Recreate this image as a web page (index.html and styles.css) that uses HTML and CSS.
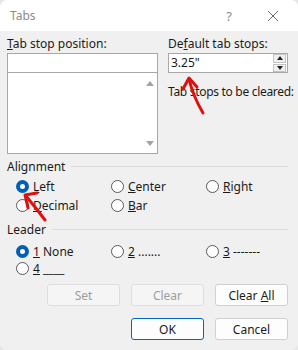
FILE: index.html
```html
<!DOCTYPE html>
<html lang="en">
  <head>
    <title>Tabs</title>
    <meta charset="utf-8" />
    <link rel="stylesheet" href="styles.css">
  </head>
  <body>
    <div class="window">
      <div class="titlebar">
        <span class="title">Tabs</span>
        <span class="help">?</span>
        <svg class="close" width="12" height="12" viewBox="0 0 12 12">
          <path d="M1 1 L11 11 M11 1 L1 11" stroke="#6e6e6e" stroke-width="1" fill="none"/>
        </svg>
      </div>

      <div class="content">
        <div class="top">
          <div class="col">
            <div class="label"><u>T</u>ab stop position:</div>
            <div class="textbox"></div>
            <div class="listbox">
              <div class="scroll">
                <span class="arrow up"></span>
                <span class="arrow down"></span>
              </div>
            </div>
          </div>
          <div class="col">
            <div class="label">De<u>f</u>ault tab stops:</div>
            <div class="textbox spin">
              <span class="value">3.25"</span>
              <div class="spinner">
                <span class="sbtn"><span class="tri up"></span></span>
                <span class="sbtn"><span class="tri down"></span></span>
              </div>
            </div>
            <div class="label cleared">Tab stops to be cleared:</div>
          </div>
        </div>

        <div class="group">
          <div class="heading"><span>Alignment</span><i></i></div>
          <div class="radios">
            <label class="radio on"><b></b><u>L</u>eft</label>
            <label class="radio"><b></b><u>C</u>enter</label>
            <label class="radio"><b></b><u>R</u>ight</label>
            <label class="radio"><b></b><u>D</u>ecimal</label>
            <label class="radio"><b></b><u>B</u>ar</label>
          </div>
        </div>

        <div class="group leader">
          <div class="heading"><span>Leader</span><i></i></div>
          <div class="radios">
            <label class="radio on"><b></b><u>1</u>&nbsp;None</label>
            <label class="radio"><b></b><u>2</u>&nbsp;.......</label>
            <label class="radio"><b></b><u>3</u>&nbsp;-------</label>
            <label class="radio"><b></b><u>4</u>&nbsp;____</label>
          </div>
        </div>

        <div class="buttons">
          <button class="off">Set</button>
          <button class="off">Clear</button>
          <button>Clear <u>A</u>ll</button>
        </div>
        <div class="buttons">
          <button class="default">OK</button>
          <button>Cancel</button>
        </div>
      </div>

      <svg class="marks" width="298" height="350" viewBox="0 0 298 350">
        <g stroke="#e01010" stroke-width="3" fill="none" stroke-linecap="round" stroke-linejoin="round">
          <path d="M189 79 Q193 96 203 113"/>
          <path d="M183 89 L189 78 L197 87"/>
          <path d="M26 196 Q36 208 45 220"/>
          <path d="M37 193 L25 195 L28 208"/>
        </g>
      </svg>
    </div>
  </body>
</html>
```

FILE: styles.css
```css
body {
  margin: 0;
  background: #e6e6e6;
  font-family: "Noto Sans", "Open Sans", sans-serif;
  font-size: 12px;
  color: #1b1b1b;
}

.window {
  position: relative;
  width: 298px;
  height: 350px;
  background: #f0f0f0;
  border-radius: 7px;
  overflow: hidden;
}

.titlebar {
  height: 31px;
  background: #fff;
  display: flex;
  align-items: center;
  padding-left: 10px;
}

.title {
  color: #8c8c8c;
  font-size: 12px;
  flex: 1;
}

.help {
  color: #8c8c8c;
  font-size: 13px;
  margin-right: 35px;
}

.close {
  margin-right: 19px;
}

.content {
  padding: 5px 10px 0 7px;
}

.top {
  display: grid;
  grid-template-columns: 151px 120px;
  column-gap: 10px;
}

.label {
  height: 17px;
  line-height: 16px;
  white-space: nowrap;
}

.textbox {
  height: 18px;
  background: #fff;
  border: 1px solid #a8a8a8;
}

.listbox {
  height: 80px;
  background: #fff;
  border: 1px solid #a8a8a8;
  border-top: none;
  display: flex;
  justify-content: flex-end;
}

.scroll {
  width: 15px;
  display: flex;
  flex-direction: column;
  justify-content: space-between;
  align-items: center;
  padding: 8px 0 7px;
}

.arrow {
  width: 0;
  height: 0;
  border-left: 4px solid transparent;
  border-right: 4px solid transparent;
}

.arrow.up {
  border-bottom: 5px solid #a3a3a3;
}

.arrow.down {
  border-top: 5px solid #a3a3a3;
}

.spin {
  display: flex;
  align-items: center;
  padding-left: 2px;
}

.value {
  flex: 1;
  line-height: 16px;
}

.spinner {
  width: 13px;
  height: 18px;
  display: flex;
  flex-direction: column;
  gap: 1px;
  margin-right: 1px;
}

.sbtn {
  flex: 1;
  background: #f0f0f0;
  border: 1px solid #c4c4c4;
  display: flex;
  align-items: center;
  justify-content: center;
}

.tri {
  width: 0;
  height: 0;
  border-left: 3px solid transparent;
  border-right: 3px solid transparent;
}

.tri.up {
  border-bottom: 4px solid #222;
}

.tri.down {
  border-top: 4px solid #222;
}

.cleared {
  margin-top: 11px;
  letter-spacing: -0.3px;
}

.group {
  margin-top: 4px;
}

.heading {
  display: flex;
  align-items: center;
  gap: 6px;
  height: 16px;
}

.heading i {
  flex: 1;
  height: 1px;
  background: #dcdcdc;
}

.radios {
  display: grid;
  grid-template-columns: 95px 95px 86px;
  padding: 4px 0 0 9px;
  row-gap: 3px;
}

.radio {
  display: flex;
  align-items: center;
  height: 16px;
  white-space: nowrap;
}

.radio b {
  box-sizing: border-box;
  width: 13px;
  height: 13px;
  border: 1px solid #595959;
  border-radius: 50%;
  background: #fff;
  margin-right: 4px;
}

.radio.on b {
  border: 4px solid #005fb8;
  background: #fff;
}

.leader {
  margin-top: 8px;
}

.leader .radios {
  padding-top: 6px;
  row-gap: 1px;
}

.buttons {
  display: flex;
  justify-content: flex-end;
  gap: 11px;
  margin-top: 8px;
}

.buttons + .buttons {
  margin-top: 12px;
}

button {
  width: 73px;
  height: 22px;
  padding: 0;
  font: inherit;
  color: #1b1b1b;
  background: #fdfdfd;
  border: 1px solid #d0d0d0;
  border-radius: 3px;
}

button.off {
  color: #9d9d9d;
  background: #f5f5f5;
  border-color: #dedede;
}

button.default {
  border-color: #0067c0;
}

.marks {
  position: absolute;
  left: 0;
  top: 0;
  pointer-events: none;
}
```
